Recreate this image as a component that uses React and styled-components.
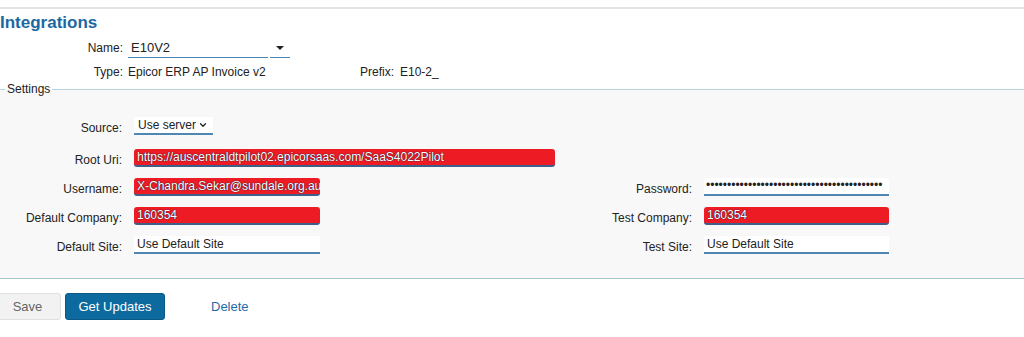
import styled, { createGlobalStyle } from "styled-components";
import { ChevronDown } from "lucide-react";

const GlobalStyle = createGlobalStyle`
  body {
    margin: 0;
    background: #fff;
    font-family: "Liberation Sans", Arial, sans-serif;
    color: #222;
    overflow: hidden;
  }
`;

const Page = styled.div`
  margin-top: 7px;
  border-top: 2px solid #e3e3e3;
`;

const Title = styled.h2`
  margin: 0;
  padding-top: 3px;
  font-size: 17px;
  line-height: 22px;
  font-weight: bold;
  color: #1b68a1;
`;

const HeadRow = styled.div`
  display: flex;
  align-items: center;
  height: ${({ h }) => h}px;
  margin-top: ${({ mt }) => mt}px;
  font-size: 12px;
`;

const HeadLabel = styled.div`
  width: 123px;
  text-align: right;
  margin-right: 5px;
`;

const NameSelect = styled.div`
  display: flex;
  align-items: stretch;
  height: 20px;
`;

const NameValue = styled.div`
  width: 137px;
  padding-left: 3px;
  font-size: 13px;
  line-height: 19px;
  border-bottom: 1px solid #4f87b3;
`;

const NameArrow = styled.div`
  width: 20px;
  margin-left: 2px;
  border-bottom: 1px solid #4f87b3;
  display: flex;
  align-items: center;
  justify-content: center;

  &::after {
    content: "";
    border-left: 4px solid transparent;
    border-right: 4px solid transparent;
    border-top: 4px solid #222;
  }
`;

const TypeValue = styled.div`
  width: 232px;
`;

const Prefix = styled.div`
  margin-right: 6px;
`;

const Fieldset = styled.fieldset`
  margin: 2px 0 0;
  padding: 21px 135px 24px 0;
  border: none;
  border-top: 1px solid #b5d4dd;
  border-bottom: 1px solid #a3c7ca;
  background: #f8f8f8;
  display: flex;
  flex-direction: column;
  gap: 11px;
`;

const Legend = styled.legend`
  margin-left: 5px;
  padding: 0 2px;
  font-size: 12px;
  line-height: 14px;
  color: #222;
`;

const Row = styled.div`
  display: flex;
  align-items: center;
  height: 18px;
  font-size: 12px;
  margin-bottom: ${({ extra }) => extra || 0}px;
`;

const Label = styled.div`
  width: 122px;
  text-align: right;
  margin-right: 12px;
  padding-top: 3px;
`;

const RightLabel = styled.div`
  flex: 1;
  text-align: right;
  margin-right: 12px;
  padding-top: 3px;
`;

const Field = styled.div`
  box-sizing: border-box;
  width: ${({ w }) => w}px;
  height: 18px;
  padding: 0 3px;
  line-height: 17px;
  font-size: 12px;
  white-space: nowrap;
  overflow: hidden;
  background: ${({ redacted }) => (redacted ? "#ed1c24" : "#fff")};
  border-radius: ${({ redacted }) => (redacted ? "3px" : "0")};
  border-bottom: 2px solid ${({ redacted }) => (redacted ? "#3d5f8c" : "#4f87b3")};
  color: ${({ redacted }) => (redacted ? "#fff" : "#222")};
  text-shadow: ${({ redacted }) =>
    redacted ? "0 0 1px #1a1a3a, 0 0 1px #1a1a3a" : "none"};
`;

const Dots = styled(Field)`
  line-height: 15px;
  padding-left: 2px;
`;

const SourceSelect = styled.div`
  box-sizing: border-box;
  width: 79px;
  height: 18px;
  background: #fff;
  border-bottom: 2px solid #4f87b3;
  display: flex;
  align-items: center;
  justify-content: space-between;
  padding: 0 5px 0 4px;
  font-size: 12px;
`;

const Footer = styled.div`
  display: flex;
  align-items: center;
  margin: 14px 0 0 -6px;
`;

const Button = styled.button`
  height: 27px;
  width: ${({ w }) => w}px;
  margin-right: 4px;
  font-family: inherit;
  font-size: 13px;
  border-radius: 3px;
  cursor: pointer;
  border: 1px solid ${({ primary }) => (primary ? "#0a5a88" : "#e0e0e0")};
  background: ${({ primary }) => (primary ? "#0d6a9f" : "#f2f2f2")};
  color: ${({ primary }) => (primary ? "#fff" : "#666")};
`;

const LinkButton = styled.button`
  margin-left: 42px;
  padding: 0;
  border: none;
  background: none;
  font-family: inherit;
  font-size: 13px;
  color: #1f69a6;
  cursor: pointer;
`;

export default function App() {
  return (
    <>
      <GlobalStyle />
      <Page>
        <Title>Integrations</Title>
        <HeadRow h={20} mt={4}>
          <HeadLabel>Name:</HeadLabel>
          <NameSelect>
            <NameValue>E10V2</NameValue>
            <NameArrow />
          </NameSelect>
        </HeadRow>
        <HeadRow h={16} mt={6}>
          <HeadLabel>Type:</HeadLabel>
          <TypeValue>Epicor ERP AP Invoice v2</TypeValue>
          <Prefix>Prefix:</Prefix>
          <div>E10-2_</div>
        </HeadRow>

        <Fieldset>
          <Legend>Settings</Legend>
          <Row extra={3}>
            <Label>Source:</Label>
            <SourceSelect>
              <span>Use server</span>
              <ChevronDown size={10} strokeWidth={3} color="#222" />
            </SourceSelect>
          </Row>
          <Row>
            <Label>Root Uri:</Label>
            <Field w={421} redacted>
              https://auscentraldtpilot02.epicorsaas.com/SaaS4022Pilot
            </Field>
          </Row>
          <Row>
            <Label>Username:</Label>
            <Field w={186} redacted>
              X-Chandra.Sekar@sundale.org.au
            </Field>
            <RightLabel>Password:</RightLabel>
            <Dots w={185}>{"•".repeat(42)}</Dots>
          </Row>
          <Row>
            <Label>Default Company:</Label>
            <Field w={186} redacted>
              160354
            </Field>
            <RightLabel>Test Company:</RightLabel>
            <Field w={185} redacted>
              160354
            </Field>
          </Row>
          <Row>
            <Label>Default Site:</Label>
            <Field w={186}>Use Default Site</Field>
            <RightLabel>Test Site:</RightLabel>
            <Field w={185}>Use Default Site</Field>
          </Row>
        </Fieldset>

        <Footer>
          <Button w={67}>Save</Button>
          <Button w={100} primary>
            Get Updates
          </Button>
          <LinkButton>Delete</LinkButton>
        </Footer>
      </Page>
    </>
  );
}
